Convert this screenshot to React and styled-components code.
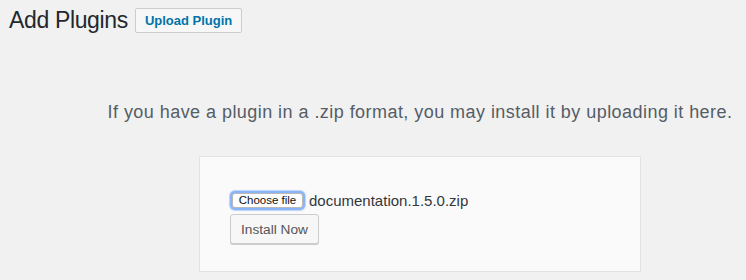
import React from "react";
import styled, { createGlobalStyle } from "styled-components";

const Global = createGlobalStyle`
  html, body {
    margin: 0;
    padding: 0;
    background: #f1f1f1;
    overflow: hidden;
  }
  body {
    font-family: "Liberation Sans", Arial, sans-serif;
    color: #444;
  }
`;

const Page = styled.div`
  width: 746px;
  height: 280px;
  background: #f1f1f1;
`;

const Header = styled.div`
  display: flex;
  align-items: center;
  padding: 6px 0 0 9px;
  gap: 7px;
`;

const Title = styled.h1`
  margin: 0;
  font-size: 23px;
  line-height: 29px;
  font-weight: 400;
  color: #23282d;
  letter-spacing: -0.35px;
`;

const ActionButton = styled.button`
  font-family: inherit;
  font-size: 13px;
  line-height: 15px;
  font-weight: 700;
  color: #0073aa;
  background: #f7f7f7;
  border: 1px solid #ccc;
  border-radius: 2px;
  padding: 4px 9px;
  margin: 0;
`;

const Upload = styled.div`
  box-sizing: border-box;
  width: 746px;
  padding-left: 94px;
  display: flex;
  flex-direction: column;
  align-items: center;
  margin-top: 65px;
`;

const Help = styled.p`
  margin: 0;
  font-size: 18px;
  line-height: 24px;
  letter-spacing: 0.45px;
  white-space: nowrap;
  color: #555d66;
`;

const Card = styled.form`
  box-sizing: border-box;
  width: 442px;
  margin-top: 32px;
  padding: 32px 30px 27px;
  background: #fafafa;
  border: 1px solid #e2e2e2;
  display: flex;
  flex-direction: column;
  gap: 3px;
`;

const FileRow = styled.div`
  display: flex;
  align-items: center;
  height: 22px;
  gap: 4px;
`;

const ChooseFile = styled.span`
  display: inline-flex;
  align-items: center;
  justify-content: center;
  box-sizing: border-box;
  width: 71px;
  height: 15px;
  margin: 0 2px;
  font-size: 11.5px;
  color: #111;
  background: #fff;
  border: 1px solid #b9b9b9;
  border-radius: 3px;
  box-shadow: 0 0 0 2px #8ab4f8, 0 0 1px 3px rgba(120, 165, 240, 0.45);
`;

const FileName = styled.span`
  font-size: 15px;
  color: #32373c;
`;

const SecondaryButton = styled.button`
  align-self: flex-start;
  box-sizing: border-box;
  height: 30px;
  padding: 0 10px;
  font-family: inherit;
  font-size: 13.7px;
  color: #555;
  background: #f7f7f7;
  border: 1px solid #ccc;
  border-radius: 3px;
  box-shadow: 0 1px 0 #ccc;
  margin: 0;
`;

export default function App() {
  return (
    <Page>
      <Global />
      <Header>
        <Title>Add Plugins</Title>
        <ActionButton type="button">Upload Plugin</ActionButton>
      </Header>
      <Upload>
        <Help>If you have a plugin in a .zip format, you may install it by uploading it here.</Help>
        <Card onSubmit={(e) => e.preventDefault()}>
          <FileRow>
            <ChooseFile>Choose file</ChooseFile>
            <FileName>documentation.1.5.0.zip</FileName>
          </FileRow>
          <SecondaryButton type="button">Install Now</SecondaryButton>
        </Card>
      </Upload>
    </Page>
  );
}
